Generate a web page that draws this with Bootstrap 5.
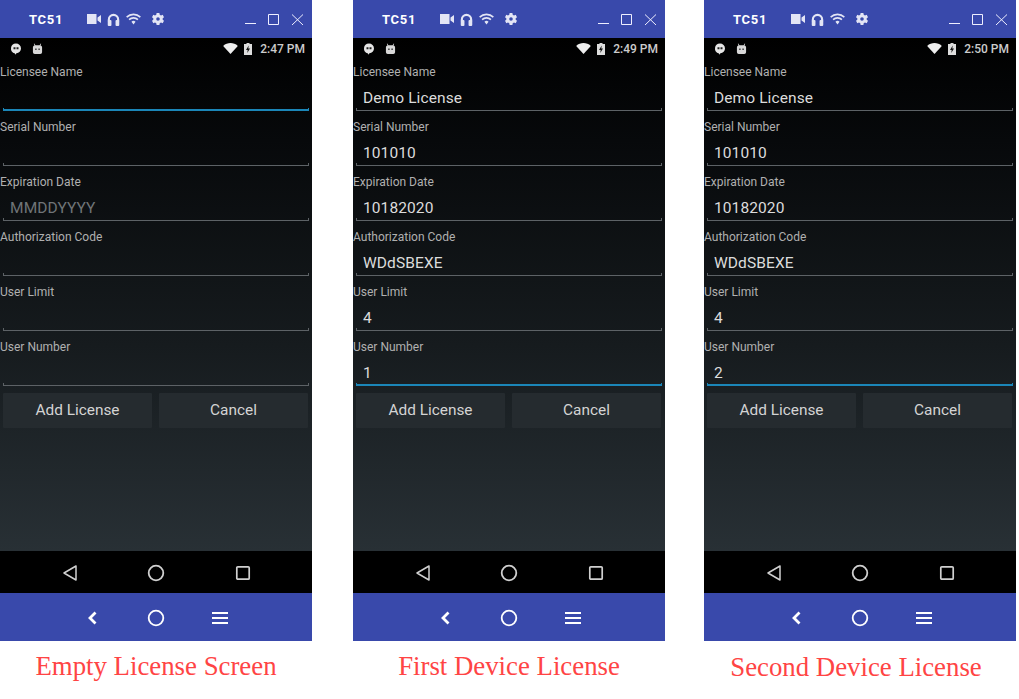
<!DOCTYPE html>
<html lang="en"><head><meta charset="utf-8"><title>TC51 License Screens</title>
<link rel="stylesheet" href="https://cdn.jsdelivr.net/npm/bootstrap@5.3.0/dist/css/bootstrap.min.css">
<style>
html,body{height:699px;overflow:hidden;background:#fff}
.sheet{gap:41px;width:1019px}
.sheet>.device-col:last-child{margin-left:-2px}
.device-col{width:312px;flex:none}
.device{width:312px;height:641px;font-family:Roboto,sans-serif}
.title-bar{height:38px;background:#3949ab;color:#fff}
.title-name{font:700 13px/39px Roboto,sans-serif;letter-spacing:.7px;margin-left:29px;width:58px}
.tool-ico{margin-right:6px}
.gear-ico{margin-left:5px}
.win-ico{margin-left:auto;margin-right:7px}
.app{height:513px;background:linear-gradient(180deg,#000 0%,#07090b 20%,#161b1e 60%,#283035 100%);color:#ddd}
.status{height:20px;padding:1px 7px 0 10px;color:#d8d8d8}
.bot-ico{margin-left:10px}
.sig-ico{margin-left:auto;margin-right:6px}
.status-time{font-size:12px;font-weight:500;line-height:14px;color:#ccc;margin-left:8px}
.lic-form{padding-top:6px}
.lic-field{height:47px;margin-bottom:8px}
.lic-label{font-size:12px;line-height:17px;color:#b0b0b0;height:16px}
.lic-input{height:31px;margin:0 3px;padding:6px 7px 0;font-size:15.5px;line-height:24px;letter-spacing:.1px;color:#dcdcdc;border-bottom:1px solid #5d6266;position:relative}
.lic-input::before{content:"";position:absolute;inset:auto 0 -1px 0;height:3px;border:solid #5d6266;border-width:0 1px}
.lic-input.on{border-bottom:2px solid #1b86b8}
.lic-input.on::before{border-color:#1b86b8;bottom:-2px}
.hint{color:#6f7477}
.lic-btns{margin:-1px 4px 0 3px;gap:7px}
.lic-btn{flex:1;height:35px;background:#252b2f;color:#d4d4d4;font-size:15.4px;border-radius:1px;line-height:35px;text-align:center}
.soft-nav{height:42px;background:#000;color:#d0d0d0}
.blue-nav{height:48px;background:#3949ab}
.nav-slot{width:64px}
.soft-slot{width:86.500px}
.cap{font:26.800px/1 "Liberation Serif",serif;color:#f44;margin-top:12px;white-space:nowrap}
.cap-two{margin-top:13px;margin-right:8px}
</style></head><body>
<svg width="0" height="0" class="position-absolute">
<symbol id="i-cam" viewBox="0 0 14 10"><path fill="#e3e5f5" d="M0 0h9.500v10H0zM10.500 3.500 14 1v8l-3.500-2.500z"/></symbol>
<symbol id="i-head" viewBox="0 0 14 14"><path fill="none" stroke="#e3e5f5" stroke-width="2.300" d="M2 9V7a5 5 0 0 1 10 0v2"/><rect fill="#e3e5f5" x=".8" y="7.500" width="4" height="6.500" rx="1"/><rect fill="#e3e5f5" x="9.200" y="7.500" width="4" height="6.500" rx="1"/></symbol>
<symbol id="i-wifi" viewBox="0 0 16 12"><g fill="none" stroke="#e3e5f5" stroke-width="1.700"><path d="M.7 4A10.500 10.500 0 0 1 15.300 4M3.300 6.700a6.700 6.700 0 0 1 9.400 0"/></g><path fill="#e3e5f5" d="M5.800 9 8 11.800 10.200 9a3 3 0 0 0-4.400 0z"/></symbol>
<symbol id="i-gear" viewBox="0 0 12 12"><path fill="#e3e5f5" fill-rule="evenodd" d="M4.600 0h2.800l.3 1.700 1.300.7L10.700 1.800 12 4.200 10.700 5.300v1.400L12 7.800l-1.300 2.400-1.700-.6-1.300.7L7.400 12H4.600l-.3-1.700-1.300-.7-1.700.6L0 7.800l1.300-1.100V5.300L0 4.200l1.300-2.400 1.700.6 1.300-.7zM6 4.200a1.800 1.800 0 1 0 0 3.600 1.800 1.800 0 0 0 0-3.600z"/></symbol>
<symbol id="i-wins" viewBox="0 0 60 14"><g fill="none" stroke="#eef" stroke-width="1"><path d="M0 11.500h11M23.500 2.500h10v10h-10zM47 2.500l11 10.500M58 2.500 47 13"/></g></symbol>
<symbol id="i-chat" viewBox="0 0 12 12"><path fill="#e6e6e6" d="M6 .5a5 5 0 0 1 5 5c0 2.500-2 4.300-4.500 4.800L5 11.800V10.400A5 5 0 0 1 6 .5z"/><path fill="#222" d="M3.500 4.300h2v2h-2zM6.500 4.300h2v2h-2z"/></symbol>
<symbol id="i-bot" viewBox="0 0 12 12"><path fill="#d8d8d8" d="M2.500 0l1.200 2h4.600L9.500 0l.5.300L9.300 2.200A2 2 0 0 1 11 4v5.500A2 2 0 0 1 9 11.500H3a2 2 0 0 1-2-2V4a2 2 0 0 1 1.700-1.800L2 .3z"/><path fill="#333" d="M3.500 5.500h1.500v1.500H3.500zM7 5.500h1.500v1.500H7z"/></symbol>
<symbol id="i-sig" viewBox="0 0 16 12"><path fill="#eee" d="M0 3.200C4.500-1 11.500-1 16 3.200L8 12z"/></symbol>
<symbol id="i-bat" viewBox="0 0 8 12"><path fill="#ddd" d="M2.500 0h3v1H8v11H0V1h2.500z"/><path fill="#111" d="M4.700 2.500 2 7h1.700l-.4 3L6 5.500H4.300z"/></symbol>
<symbol id="i-back" viewBox="0 0 16 18"><path fill="none" stroke="#d0d0d0" stroke-width="1.500" d="M14 2v14L2 9z" stroke-linejoin="round"/></symbol>
<symbol id="i-ring" viewBox="0 0 18 18"><circle cx="9" cy="9" r="7.300" fill="none" stroke="currentColor" stroke-width="1.800"/></symbol>
<symbol id="i-sq" viewBox="0 0 16 16"><rect x="1.800" y="1.800" width="12.400" height="12.400" rx="1" fill="none" stroke="#d0d0d0" stroke-width="1.700"/></symbol>
<symbol id="i-chev" viewBox="0 0 10 14"><path fill="none" stroke="#fff" stroke-width="2.800" d="M8.500 1.500 3 7l5.500 5.500"/></symbol>
<symbol id="i-menu" viewBox="0 0 16 14"><path fill="none" stroke="#fff" stroke-width="2.200" d="M0 2h16M0 7h16M0 12h16"/></symbol>
</svg>
<main class="sheet d-flex">

<section class="device-col text-center">
<div class="device text-start d-flex flex-column">
<div class="title-bar d-flex align-items-center">
<span class="title-name">TC51</span>
<svg class="tool-ico" width="14" height="10"><use href="#i-cam"/></svg><svg class="tool-ico" width="13" height="13"><use href="#i-head"/></svg><svg class="tool-ico" width="15" height="12"><use href="#i-wifi"/></svg><svg class="gear-ico" width="12" height="12"><use href="#i-gear"/></svg>
<svg class="win-ico" width="60" height="14"><use href="#i-wins"/></svg>
</div>
<div class="app flex-grow-1">
<div class="status d-flex align-items-center"><svg width="12" height="12"><use href="#i-chat"/></svg><svg class="bot-ico" width="11" height="12"><use href="#i-bot"/></svg>
<svg class="sig-ico" width="15" height="11"><use href="#i-sig"/></svg><svg width="8" height="12"><use href="#i-bat"/></svg><span class="status-time">2:47 PM</span></div>
<div class="lic-form">
<div class="lic-field"><div class="lic-label">Licensee Name</div><div class="lic-input on"></div></div>
<div class="lic-field"><div class="lic-label">Serial Number</div><div class="lic-input"></div></div>
<div class="lic-field"><div class="lic-label">Expiration Date</div><div class="lic-input hint">MMDDYYYY</div></div>
<div class="lic-field"><div class="lic-label">Authorization Code</div><div class="lic-input"></div></div>
<div class="lic-field"><div class="lic-label">User Limit</div><div class="lic-input"></div></div>
<div class="lic-field"><div class="lic-label">User Number</div><div class="lic-input"></div></div>
<div class="lic-btns d-flex"><div class="lic-btn">Add License</div><div class="lic-btn">Cancel</div></div>
</div></div>
<div class="soft-nav d-flex justify-content-center align-items-center"><span class="soft-slot text-center"><svg width="16" height="18"><use href="#i-back"/></svg></span><span class="soft-slot text-center"><svg width="18" height="18"><use href="#i-ring"/></svg></span><span class="soft-slot text-center"><svg width="16" height="16"><use href="#i-sq"/></svg></span></div>
<div class="blue-nav d-flex justify-content-center align-items-center text-white"><span class="nav-slot text-center"><svg width="10" height="14"><use href="#i-chev"/></svg></span><span class="nav-slot text-center"><svg width="18" height="18"><use href="#i-ring"/></svg></span><span class="nav-slot text-center"><svg width="16" height="14"><use href="#i-menu"/></svg></span></div>
</div>
<div class="cap">Empty License Screen</div>
</section>

<section class="device-col text-center">
<div class="device text-start d-flex flex-column">
<div class="title-bar d-flex align-items-center">
<span class="title-name">TC51</span>
<svg class="tool-ico" width="14" height="10"><use href="#i-cam"/></svg><svg class="tool-ico" width="13" height="13"><use href="#i-head"/></svg><svg class="tool-ico" width="15" height="12"><use href="#i-wifi"/></svg><svg class="gear-ico" width="12" height="12"><use href="#i-gear"/></svg>
<svg class="win-ico" width="60" height="14"><use href="#i-wins"/></svg>
</div>
<div class="app flex-grow-1">
<div class="status d-flex align-items-center"><svg width="12" height="12"><use href="#i-chat"/></svg><svg class="bot-ico" width="11" height="12"><use href="#i-bot"/></svg>
<svg class="sig-ico" width="15" height="11"><use href="#i-sig"/></svg><svg width="8" height="12"><use href="#i-bat"/></svg><span class="status-time">2:49 PM</span></div>
<div class="lic-form">
<div class="lic-field"><div class="lic-label">Licensee Name</div><div class="lic-input">Demo License</div></div>
<div class="lic-field"><div class="lic-label">Serial Number</div><div class="lic-input">101010</div></div>
<div class="lic-field"><div class="lic-label">Expiration Date</div><div class="lic-input">10182020</div></div>
<div class="lic-field"><div class="lic-label">Authorization Code</div><div class="lic-input">WDdSBEXE</div></div>
<div class="lic-field"><div class="lic-label">User Limit</div><div class="lic-input">4</div></div>
<div class="lic-field"><div class="lic-label">User Number</div><div class="lic-input on">1</div></div>
<div class="lic-btns d-flex"><div class="lic-btn">Add License</div><div class="lic-btn">Cancel</div></div>
</div></div>
<div class="soft-nav d-flex justify-content-center align-items-center"><span class="soft-slot text-center"><svg width="16" height="18"><use href="#i-back"/></svg></span><span class="soft-slot text-center"><svg width="18" height="18"><use href="#i-ring"/></svg></span><span class="soft-slot text-center"><svg width="16" height="16"><use href="#i-sq"/></svg></span></div>
<div class="blue-nav d-flex justify-content-center align-items-center text-white"><span class="nav-slot text-center"><svg width="10" height="14"><use href="#i-chev"/></svg></span><span class="nav-slot text-center"><svg width="18" height="18"><use href="#i-ring"/></svg></span><span class="nav-slot text-center"><svg width="16" height="14"><use href="#i-menu"/></svg></span></div>
</div>
<div class="cap">First Device License</div>
</section>

<section class="device-col text-center">
<div class="device text-start d-flex flex-column">
<div class="title-bar d-flex align-items-center">
<span class="title-name">TC51</span>
<svg class="tool-ico" width="14" height="10"><use href="#i-cam"/></svg><svg class="tool-ico" width="13" height="13"><use href="#i-head"/></svg><svg class="tool-ico" width="15" height="12"><use href="#i-wifi"/></svg><svg class="gear-ico" width="12" height="12"><use href="#i-gear"/></svg>
<svg class="win-ico" width="60" height="14"><use href="#i-wins"/></svg>
</div>
<div class="app flex-grow-1">
<div class="status d-flex align-items-center"><svg width="12" height="12"><use href="#i-chat"/></svg><svg class="bot-ico" width="11" height="12"><use href="#i-bot"/></svg>
<svg class="sig-ico" width="15" height="11"><use href="#i-sig"/></svg><svg width="8" height="12"><use href="#i-bat"/></svg><span class="status-time">2:50 PM</span></div>
<div class="lic-form">
<div class="lic-field"><div class="lic-label">Licensee Name</div><div class="lic-input">Demo License</div></div>
<div class="lic-field"><div class="lic-label">Serial Number</div><div class="lic-input">101010</div></div>
<div class="lic-field"><div class="lic-label">Expiration Date</div><div class="lic-input">10182020</div></div>
<div class="lic-field"><div class="lic-label">Authorization Code</div><div class="lic-input">WDdSBEXE</div></div>
<div class="lic-field"><div class="lic-label">User Limit</div><div class="lic-input">4</div></div>
<div class="lic-field"><div class="lic-label">User Number</div><div class="lic-input on">2</div></div>
<div class="lic-btns d-flex"><div class="lic-btn">Add License</div><div class="lic-btn">Cancel</div></div>
</div></div>
<div class="soft-nav d-flex justify-content-center align-items-center"><span class="soft-slot text-center"><svg width="16" height="18"><use href="#i-back"/></svg></span><span class="soft-slot text-center"><svg width="18" height="18"><use href="#i-ring"/></svg></span><span class="soft-slot text-center"><svg width="16" height="16"><use href="#i-sq"/></svg></span></div>
<div class="blue-nav d-flex justify-content-center align-items-center text-white"><span class="nav-slot text-center"><svg width="10" height="14"><use href="#i-chev"/></svg></span><span class="nav-slot text-center"><svg width="18" height="18"><use href="#i-ring"/></svg></span><span class="nav-slot text-center"><svg width="16" height="14"><use href="#i-menu"/></svg></span></div>
</div>
<div class="cap cap-two">Second Device License</div>
</section>
</main>
</body></html>
